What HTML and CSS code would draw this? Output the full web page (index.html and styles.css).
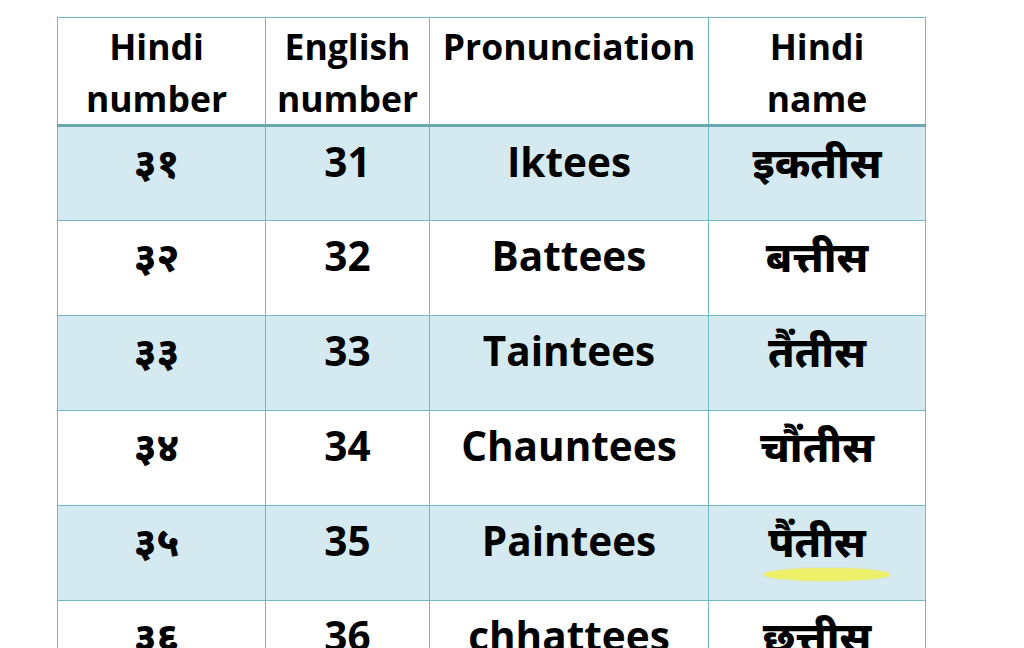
FILE: index.html
```html
<!DOCTYPE html>
<html>
<head>
<meta charset="utf-8">
<link rel="stylesheet" href="styles.css">
</head>
<body>
<div class="page">
<table class="num-table">
<colgroup>
<col class="c1"><col class="c2"><col class="c3"><col class="c4">
</colgroup>
<thead>
<tr><th class="first">Hindi<br>number</th><th>English<br>number</th><th>Pronunciation</th><th>Hindi<br>name</th></tr>
</thead>
<tbody>
<tr class="alt"><td class="dev num first">३१</td><td>31</td><td>Iktees</td><td class="dev">इकतीस</td></tr>
<tr><td class="dev num first">३२</td><td>32</td><td>Battees</td><td class="dev">बत्तीस</td></tr>
<tr class="alt"><td class="dev num first">३३</td><td>33</td><td>Taintees</td><td class="dev">तैंतीस</td></tr>
<tr><td class="dev num first">३४</td><td>34</td><td>Chauntees</td><td class="dev">चौंतीस</td></tr>
<tr class="alt"><td class="dev num first">३५</td><td>35</td><td>Paintees</td><td class="dev hl-cell">पैंतीस<span class="highlight"></span></td></tr>
<tr><td class="dev num first">३६</td><td>36</td><td>chhattees</td><td class="dev">छत्तीस</td></tr>
</tbody>
</table>
</div>
</body>
</html>
```
FILE: styles.css
```css
html, body {
  margin: 0;
  padding: 0;
  background: #ffffff;
  overflow: hidden;
}
.page {
  width: 1024px;
  height: 648px;
  padding: 17px 0 0 57px;
  box-sizing: border-box;
  overflow: hidden;
}
.num-table {
  border-collapse: collapse;
  table-layout: fixed;
  width: 869px;
  font-family: "Open Sans", "Noto Sans", sans-serif;
  font-weight: 700;
  color: #000;
}
.c1 { width: 208px; }
.c2 { width: 164px; }
.c3 { width: 279px; }
.c4 { width: 217px; }
.num-table th, .num-table td {
  border: 1px solid #6fbac4;
  text-align: center;
  vertical-align: top;
  padding: 0;
}
.num-table .first {
  padding-right: 10px;
}
.num-table th {
  font-size: 35.5px;
  line-height: 52px;
  height: 104px;
  padding-top: 2px;
  font-weight: 700;
  border-bottom: 3px solid #68a9b1;
}
.num-table td {
  font-size: 40.5px;
  font-weight: 700;
  line-height: 48px;
  height: 95px;
  padding-top: 11px;
  box-sizing: border-box;
}
.num-table td.dev {
  font-size: 42px;
  font-weight: 800;
}
.num-table td.dev.num {
  font-size: 40px;
}
.num-table tr.alt td {
  background: #d4eaf0;
}
.hl-cell {
  position: relative;
}
.highlight {
  position: absolute;
  left: 55px;
  top: 62px;
  width: 126px;
  height: 13px;
  border-radius: 50%;
  background: #eef06a;
  box-shadow: 0 0 2px #e0e080;
}
```
